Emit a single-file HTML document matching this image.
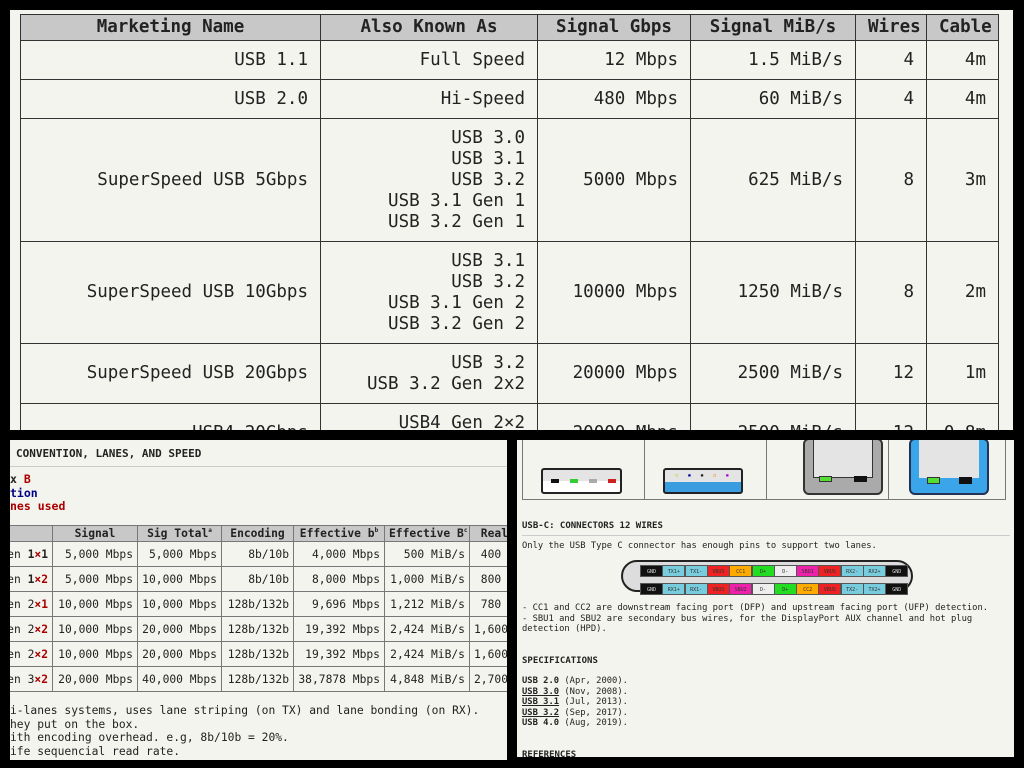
<!DOCTYPE html>
<html><head><meta charset="utf-8"><style>
*{margin:0;padding:0;box-sizing:border-box}
body{width:1024px;height:768px;background:#000;position:relative;overflow:hidden;font-family:"DejaVu Sans Mono","Liberation Mono",monospace;color:#222}
.p{position:absolute;background:#f4f4ee;overflow:hidden}
table{border-collapse:collapse;position:absolute;table-layout:fixed}
td,th{border:1.5px solid #333;text-align:right;vertical-align:middle;white-space:nowrap;overflow:hidden}
#t1 td,#t1 th{font-size:17.5px;padding:0 12px;line-height:21px}
#t1 th{background:#c8c8c8;text-align:center;height:26px}
#t2 td,#t2 th{font-size:11.3px;padding:0 4px;border-color:#777}
#t2 th{background:#c8c8c8;text-align:center;height:16px}
#t2 td{height:25px}
.r{color:#a00;font-weight:bold}
.abs{position:absolute;white-space:nowrap}
.pin{position:absolute;width:23px;height:12px;font-size:5px;text-align:center;line-height:12px;border:1px solid #555;color:#333}
</style></head><body>

<div class="p" style="left:10px;top:10px;width:1003px;height:420px">
<table id="t1" style="left:10px;top:4px;width:978px">
<colgroup><col style="width:300px"><col style="width:217px"><col style="width:153px"><col style="width:165px"><col style="width:71px"><col style="width:72px"></colgroup>
<tr><th>Marketing Name</th><th>Also Known As</th><th>Signal Gbps</th><th>Signal MiB/s</th><th>Wires</th><th>Cable</th></tr>
<tr style="height:39px"><td>USB 1.1</td><td>Full Speed</td><td>12 Mbps</td><td>1.5 MiB/s</td><td>4</td><td>4m</td></tr>
<tr style="height:39px"><td>USB 2.0</td><td>Hi-Speed</td><td>480 Mbps</td><td>60 MiB/s</td><td>4</td><td>4m</td></tr>
<tr style="height:123px"><td>SuperSpeed USB 5Gbps</td><td>USB 3.0<br>USB 3.1<br>USB 3.2<br>USB 3.1 Gen 1<br>USB 3.2 Gen 1</td><td>5000 Mbps</td><td>625 MiB/s</td><td>8</td><td>3m</td></tr>
<tr style="height:102px"><td>SuperSpeed USB 10Gbps</td><td>USB 3.1<br>USB 3.2<br>USB 3.1 Gen 2<br>USB 3.2 Gen 2</td><td>10000 Mbps</td><td>1250 MiB/s</td><td>8</td><td>2m</td></tr>
<tr style="height:60px"><td>SuperSpeed USB 20Gbps</td><td>USB 3.2<br>USB 3.2 Gen 2x2</td><td>20000 Mbps</td><td>2500 MiB/s</td><td>12</td><td>1m</td></tr>
<tr style="height:60px"><td>USB4 20Gbps</td><td>USB4 Gen 2×2<br>&nbsp;</td><td>20000 Mbps</td><td>2500 MiB/s</td><td>12</td><td>0.8m</td></tr>
</table>
</div>

<div class="p" style="left:10px;top:440px;width:497px;height:320px">
<div class="abs" style="left:6px;top:7px;font-size:11px;font-weight:bold">CONVENTION, LANES, AND SPEED</div>
<div class="abs" style="left:0;top:26px;width:497px;border-top:1px solid #ccc"></div>
<div class="abs" style="left:0;top:33px;font-size:11.5px;font-weight:bold;line-height:13.5px">x <span style="color:#a00">B</span><br><span style="color:#008">tion</span><br><span style="color:#a00">nes used</span></div>
<table id="t2" style="left:-10px;top:85px;width:560px">
<colgroup><col style="width:52px"><col style="width:85px"><col style="width:84px"><col style="width:72px"><col style="width:91px"><col style="width:85px"><col style="width:91px"></colgroup>
<tr><th></th><th>Signal</th><th>Sig Total<sup style="font-size:6px">a</sup></th><th>Encoding</th><th>Effective b<sup style="font-size:6px">b</sup></th><th>Effective B<sup style="font-size:6px">c</sup></th><th style="text-align:left">&nbsp;Real</th></tr>
<tr><td>en <b>1<span class="r">×</span>1</b></td><td>5,000 Mbps</td><td>5,000 Mbps</td><td>8b/10b</td><td>4,000 Mbps</td><td>500 MiB/s</td><td style="text-align:left">&nbsp;400</td></tr>
<tr><td>en <b>1<span class="r">×2</span></b></td><td>5,000 Mbps</td><td>10,000 Mbps</td><td>8b/10b</td><td>8,000 Mbps</td><td>1,000 MiB/s</td><td style="text-align:left">&nbsp;800</td></tr>
<tr><td>en 2<b class="r">×1</b></td><td>10,000 Mbps</td><td>10,000 Mbps</td><td>128b/132b</td><td>9,696 Mbps</td><td>1,212 MiB/s</td><td style="text-align:left">&nbsp;780</td></tr>
<tr><td>en 2<b class="r">×2</b></td><td>10,000 Mbps</td><td>20,000 Mbps</td><td>128b/132b</td><td>19,392 Mbps</td><td>2,424 MiB/s</td><td style="text-align:left">1,600</td></tr>
<tr><td>en 2<b class="r">×2</b></td><td>10,000 Mbps</td><td>20,000 Mbps</td><td>128b/132b</td><td>19,392 Mbps</td><td>2,424 MiB/s</td><td style="text-align:left">1,600</td></tr>
<tr><td>en 3<b class="r">×2</b></td><td>20,000 Mbps</td><td>40,000 Mbps</td><td>128b/132b</td><td>38,7878 Mbps</td><td>4,848 MiB/s</td><td style="text-align:left">2,700</td></tr>
</table>
<div class="abs" style="left:0;top:264px;font-size:11.3px;line-height:13.5px">i-lanes systems, uses lane striping (on TX) and lane bonding (on RX).<br>hey put on the box.<br>ith encoding overhead. e.g, 8b/10b = 20%.<br>ife sequencial read rate.</div>
</div>

<div class="p" style="left:517px;top:440px;width:497px;height:317px">
<div class="abs" style="left:5px;top:-2px;width:484px;height:62px;border:1px solid #777;border-top:none"></div>
<div class="abs" style="left:127px;top:0;height:59px;border-left:1px solid #777"></div>
<div class="abs" style="left:249px;top:0;height:59px;border-left:1px solid #777"></div>
<div class="abs" style="left:371px;top:0;height:59px;border-left:1px solid #777"></div>
<div class="abs" style="left:24px;top:28px;width:81px;height:26px;border:2px solid #222;border-radius:3px;background:linear-gradient(#e4e4e4 50%,#fff 50%)"></div>
<div class="abs" style="left:34px;top:39px;width:8px;height:4px;background:#111"></div>
<div class="abs" style="left:53px;top:39px;width:8px;height:4px;background:#3c3"></div>
<div class="abs" style="left:72px;top:39px;width:8px;height:4px;background:#aaa"></div>
<div class="abs" style="left:91px;top:39px;width:8px;height:4px;background:#c22"></div>
<div class="abs" style="left:146px;top:28px;width:80px;height:26px;border:2px solid #222;border-radius:3px;background:linear-gradient(#e4e4e4 55%,#3a9de0 55%)"></div>
<div class="abs" style="left:158px;top:32px;font-size:6px;letter-spacing:9px"><span style="color:#cc0">▫</span><span style="color:#00a">▪</span>▪<span style="color:#e80">▫</span><span style="color:#a0c">▪</span></div>
<div class="abs" style="left:286px;top:-2px;width:80px;height:57px;border:2px solid #333;border-radius:6px;background:#aaa"></div>
<div class="abs" style="left:296px;top:-2px;width:60px;height:40px;border:1px solid #333;background:#e4e4e4"></div>
<div class="abs" style="left:302px;top:36px;width:13px;height:6px;background:#5d3;border:1px solid #333"></div>
<div class="abs" style="left:337px;top:36px;width:13px;height:6px;background:#111"></div>
<div class="abs" style="left:392px;top:-2px;width:80px;height:57px;border:2px solid #235;border-radius:6px;background:#3aa5e8"></div>
<div class="abs" style="left:402px;top:-2px;width:60px;height:40px;background:#e4e4e4"></div>
<div class="abs" style="left:410px;top:37px;width:13px;height:7px;background:#5d3;border:1px solid #333"></div>
<div class="abs" style="left:442px;top:37px;width:13px;height:7px;background:#111"></div>

<div class="abs" style="left:5px;top:81px;font-size:9px;font-weight:bold">USB-C: CONNECTORS 12 WIRES</div>
<div class="abs" style="left:5px;top:95px;width:488px;border-top:1px solid #ccc"></div>
<div class="abs" style="left:5px;top:101px;font-size:8.8px">Only the USB Type C connector has enough pins to support two lanes.</div>
<div class="abs" style="left:104px;top:120px;width:292px;height:32px;border:2px solid #222;border-radius:16px;background:#ddd"></div>
<div id="pins"></div>
<div class="abs" style="left:5px;top:163px;font-size:8.8px;line-height:10.5px">- CC1 and CC2 are downstream facing port (DFP) and upstream facing port (UFP) detection.<br>- SBU1 and SBU2 are secondary bus wires, for the DisplayPort AUX channel and hot plug<br>detection (HPD).</div>
<div class="abs" style="left:5px;top:216px;font-size:9px;font-weight:bold">SPECIFICATIONS</div>
<div class="abs" style="left:5px;top:236px;font-size:8.8px;line-height:10.5px"><b>USB 2.0</b> (Apr, 2000).<br><b><u>USB 3.0</u></b> (Nov, 2008).<br><b><u>USB 3.1</u></b> (Jul, 2013).<br><b><u>USB 3.2</u></b> (Sep, 2017).<br><b>USB 4.0</b> (Aug, 2019).</div>
<div class="abs" style="left:5px;top:310px;font-size:9px;font-weight:bold">REFERENCES</div>
</div>
<script>
var top1=["GND:#111:#ddd","TX1+:#7cd","TX1-:#7cd","VBUS:#e22","CC1:#fa0","D+:#2d2","D-:#eee","SBU1:#e2a","VBUS:#e22","RX2-:#7cd","RX2+:#7cd","GND:#111:#ddd"];
var bot=["GND:#111:#ddd","RX1+:#7cd","RX1-:#7cd","VBUS:#e22","SBU2:#e2a","D-:#eee","D+:#2d2","CC2:#fa0","VBUS:#e22","TX2-:#7cd","TX2+:#7cd","GND:#111:#ddd"];
var h="";
[[top1,125],[bot,143]].forEach(function(a){a[0].forEach(function(p,i){var s=p.split(":");h+='<div class="pin" style="left:'+(640-517+i*22.3)+'px;top:'+a[1]+'px;background:'+s[1]+';color:'+(s[2]||'#333')+'">'+s[0]+'</div>';});});
document.getElementById("pins").innerHTML=h;
</script>
</body></html>
